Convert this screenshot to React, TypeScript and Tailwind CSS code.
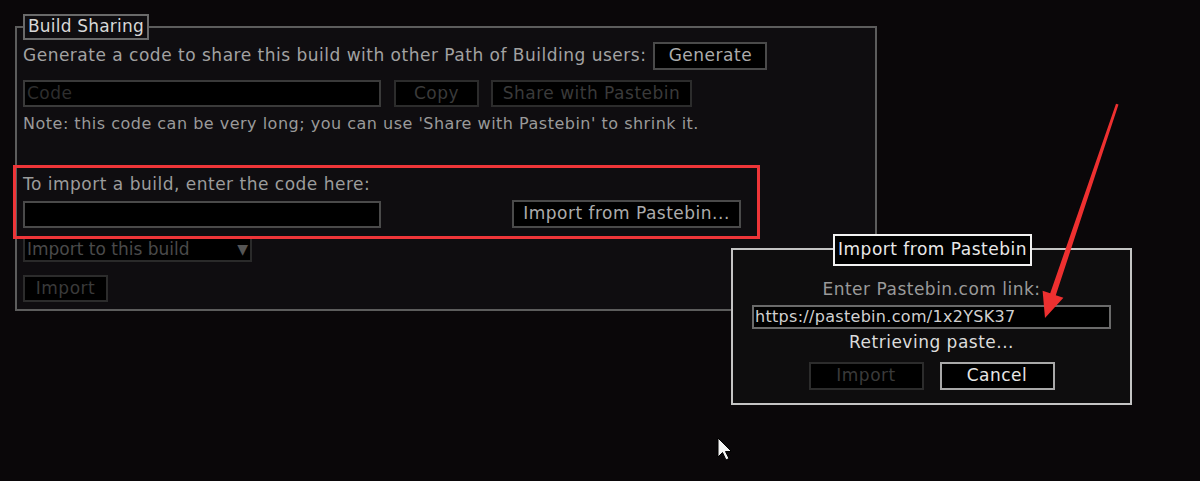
import React from 'react';

const font = { fontFamily: '"DejaVu Sans", "Liberation Sans", sans-serif' };

function Btn({ children, w, h = 'h-[28px]', dim = false, bright = false }: { children: React.ReactNode; w: string; h?: string; dim?: boolean; bright?: boolean }) {
  return (
    <div
      className={`flex items-center justify-center border-2 bg-black text-[17px] tracking-[0.5px] ${w} ${h} ${
        dim ? 'border-[#2c2c2c] text-[#3a3a3a]' : bright ? 'border-[#a8a8a8] text-[#e6e6e6]' : 'border-[#4a4a4a] text-[#acacac]'
      }`}
    >
      {children}
    </div>
  );
}

export default function App() {
  return (
    <div className="relative h-[481px] w-[1200px] overflow-hidden bg-[#0a0709] pt-[26px] pl-[15px]" style={font}>
      {/* main panel */}
      <div className="relative h-[285px] w-[862px] border-2 border-[#5c5c5c] bg-[#0f0d10] pl-[6px] pt-[14px] text-[#a2a2a2]">
        <div className="absolute top-[-14px] left-[6px] flex h-[26px] items-center border-2 border-[#6a6a6a] bg-[#0f0d10] px-[3px] text-[17px] tracking-[0.2px] text-[#d8d8d8]">
          Build Sharing
        </div>

        <div className="flex h-[28px] items-center gap-[7px] text-[17px] tracking-[0.5px]">
          <span>Generate a code to share this build with other Path of Building users:</span>
          <Btn w="w-[114px]">Generate</Btn>
        </div>

        <div className="mt-[10px] flex h-[27px] items-center text-[17px]">
          <div className="flex h-[27px] w-[358px] items-center border-2 border-[#3a3a3a] bg-black pl-[2px] tracking-[0.5px] text-[#2e2e2e]">Code</div>
          <div className="ml-[13px]"><Btn w="w-[85px]" h="h-[27px]" dim>Copy</Btn></div>
          <div className="ml-[12px]"><Btn w="w-[201px]" h="h-[27px]" dim>Share with Pastebin</Btn></div>
        </div>

        <div className="mt-[7px] h-[20px] text-[16px] leading-[20px] tracking-[0.5px] text-[#9a9a9a]">Note: this code can be very long; you can use 'Share with Pastebin' to shrink it.</div>

        <div className="mt-[40px] h-[20px] text-[17px] leading-[20px] tracking-[0.5px] text-[#9c9c9c]">To import a build, enter the code here:</div>

        <div className="mt-[6px] flex h-[28px] items-center">
          <div className="h-[27px] w-[358px] border-2 border-[#4a4a4a] bg-black" />
          <div className="ml-[131px]"><Btn w="w-[229px]">Import from Pastebin...</Btn></div>
        </div>

        <div className="mt-[9px] flex h-[25px] w-[229px] items-center justify-between border-2 border-[#2a2a2a] bg-black px-[2px] text-[17px] text-[#4a4a4a]">
          <span>Import to this build</span>
          <span className="text-[14px] text-[#555]">▼</span>
        </div>

        <div className="mt-[13px]"><Btn w="w-[85px]" h="h-[27px]" dim>Import</Btn></div>
      </div>

      {/* red highlight annotation */}
      <div className="pointer-events-none absolute top-[165px] left-[13px] h-[74px] w-[747px] border-[3px] border-[#ee3538]" />

      {/* dialog */}
      <div className="absolute top-[248px] left-[731px] h-[157px] w-[401px] border-2 border-[#c4c4c4] bg-[#0e0d0e] text-[17px] tracking-[0.5px]">
        <div className="absolute top-[-16px] left-[100px] flex h-[32px] w-[199px] items-center justify-center border-2 border-[#f2f2f2] bg-black text-[#e8e8e8]">
          Import from Pastebin
        </div>
        <div className="mt-[29px] h-[20px] text-center leading-[20px] text-[#9a9a9a]">Enter Pastebin.com link:</div>
        <div className="mx-auto mt-[6px] flex h-[24px] w-[359px] items-center border-2 border-[#6a6a6a] bg-black pl-[1px] text-[16px] tracking-[0.3px] text-[#d0d0d0]">
          https://pastebin.com/1x2YSK37
        </div>
        <div className="mt-[3px] h-[20px] text-center leading-[20px] text-[#dcdcdc]">Retrieving paste...</div>
        <div className="mt-[10px] flex justify-center gap-[16px]">
          <Btn w="w-[115px]" dim>Import</Btn>
          <Btn w="w-[115px]" bright>Cancel</Btn>
        </div>
      </div>

      {/* red arrow */}
      <svg className="pointer-events-none absolute top-0 left-0" width="1200" height="481">
        <polygon
          points="1116,103.7 1118.5,104.5 1055.8,295.3 1063.4,297.8 1045,318 1042.6,290.8 1050.2,293.3"
          fill="#ee3030"
        />
      </svg>

      {/* cursor */}
      <svg className="absolute top-[437px] left-[717px]" width="18" height="26" viewBox="0 0 18 26">
        <path d="M1 1 L1 20 L5.5 15.5 L9 23 L12 21.5 L8.5 14.5 L14.5 14.5 Z" fill="#f4f4f4" stroke="#000" strokeWidth="1" />
      </svg>
    </div>
  );
}
